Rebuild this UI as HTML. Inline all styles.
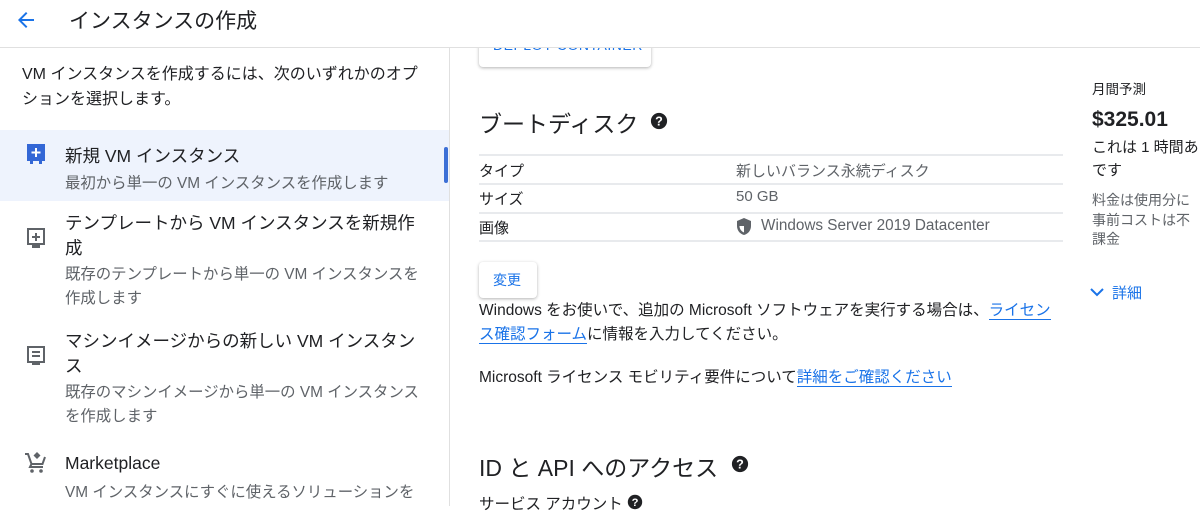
<!DOCTYPE html>
<html><head><meta charset="utf-8"><style>
*{margin:0;padding:0;box-sizing:border-box}
body{width:1200px;height:506px;overflow:hidden;background:#fff;font-family:"Liberation Sans","Noto Sans CJK JP",sans-serif;color:#202124;position:relative}
.a{position:absolute;white-space:nowrap}
.g{color:#5f6368}
.b{color:#1a73e8}
.lk{color:#1a73e8;border-bottom:1px solid #1a73e8}
.hr{position:absolute;left:479px;width:584px;height:2px;background:#e8eaed}
</style></head><body>
<div class="a" style="left:479px;top:25px;width:172px;height:42px;background:#fff;border-radius:4px;box-shadow:0 1px 3px rgba(0,0,0,.3);overflow:hidden"><div style="position:absolute;left:14px;top:12px;font-size:14px;color:#1a73e8;letter-spacing:.5px">DEPLOY CONTAINER</div></div>
<div class="a" style="left:0;top:0;width:1200px;height:47px;background:#fff;z-index:2"></div>
<svg class="a" style="left:14px;top:8px;z-index:3" width="24" height="24" viewBox="0 0 24 24"><path d="M20 11H7.8l5.6-5.6L12 4l-8 8 8 8 1.4-1.4L7.8 13H20z" fill="#1a73e8"/></svg>
<div class="a" style="left:69px;top:5px;font-size:21px;z-index:3">インスタンスの作成</div>
<div class="a" style="left:0;top:47px;width:1200px;height:1px;background:#e0e0e0;z-index:3"></div>
<div class="a" style="left:449px;top:48px;width:1px;height:458px;background:#e0e0e0"></div>

<div class="a" style="left:22px;top:62px;font-size:16px;line-height:25px">VM インスタンスを作成するには、次のいずれかのオプ<br>ションを選択します。</div>

<div class="a" style="left:0;top:130px;width:449px;height:71px;background:#eef3fd"></div>
<div class="a" style="left:444px;top:147px;width:4px;height:36px;background:#3c6fd6;border-radius:2px"></div>
<svg class="a" style="left:26px;top:143px" width="20" height="22" viewBox="0 0 20 22"><path d="M1 1h18v17h-3v3h-3v-3H7v3H4v-3H1z" fill="#3367d6"/><path d="M9 5h2v3.5h3.5v2H11V14H9v-3.5H5.5v-2H9z" fill="#fff"/></svg>
<div class="a" style="left:65px;top:143px;font-size:17.5px">新規 VM インスタンス</div>
<div class="a g" style="left:65px;top:171px;font-size:15.4px">最初から単一の VM インスタンスを作成します</div>

<svg class="a" style="left:26px;top:227px" width="20" height="22" viewBox="0 0 20 22"><path d="M2 2h16v15H2z" fill="none" stroke="#5f6368" stroke-width="2"/><path d="M3 17h3v4h8v-4h3" fill="#5f6368"/><path d="M9 6h2v3h3v2h-3v3H9v-3H6V9h3z" fill="#5f6368"/></svg>
<div class="a" style="left:65px;top:211px;font-size:17.5px;line-height:25px">テンプレートから VM インスタンスを新規作<br>成</div>
<div class="a g" style="left:65px;top:263px;font-size:15.4px;line-height:24px">既存のテンプレートから単一の VM インスタンスを<br>作成します</div>

<svg class="a" style="left:26px;top:345px" width="20" height="22" viewBox="0 0 20 22"><path d="M2 2h16v15H2z" fill="none" stroke="#5f6368" stroke-width="2"/><path d="M3 17h3v3h8v-3h3" fill="#5f6368"/><rect x="6" y="6" width="8" height="2" fill="#5f6368"/><rect x="6" y="10" width="8" height="2" fill="#5f6368"/></svg>
<div class="a" style="left:65px;top:329px;font-size:17.5px;line-height:25px">マシンイメージからの新しい VM インスタン<br>ス</div>
<div class="a g" style="left:65px;top:381px;font-size:15.4px;line-height:24px">既存のマシンイメージから単一の VM インスタンス<br>を作成します</div>

<svg class="a" style="left:24px;top:451px" width="24" height="24" viewBox="0 0 24 24"><path d="M1 3h3l3.5 10h11L21 6" fill="none" stroke="#5f6368" stroke-width="2"/><path d="M7.5 13l-1.5 3h13" fill="none" stroke="#5f6368" stroke-width="2"/><circle cx="8" cy="20" r="1.8" fill="#5f6368"/><circle cx="17" cy="20" r="1.8" fill="#5f6368"/><path d="M13 1l3.5 3.5L13 8 9.5 4.5z" fill="#5f6368"/></svg>
<div class="a" style="left:65px;top:453px;font-size:17.5px">Marketplace</div>
<div class="a g" style="left:65px;top:480px;font-size:15.4px">VM インスタンスにすぐに使えるソリューションを</div>

<div class="a" style="left:479px;top:105px;font-size:23px">ブートディスク</div>
<svg class="a" style="left:650px;top:112px" width="18" height="18" viewBox="0 0 20 20"><circle cx="10" cy="10" r="9" fill="#202124"/><text x="10" y="15" font-size="14" font-weight="bold" fill="#fff" text-anchor="middle" font-family="Liberation Sans">?</text></svg>
<div class="hr" style="top:154px"></div>
<div class="a" style="left:479px;top:160px;font-size:15px">タイプ</div><div class="a g" style="left:736px;top:160px;font-size:15px">新しいバランス永続ディスク</div>
<div class="hr" style="top:183px"></div>
<div class="a" style="left:479px;top:188px;font-size:15px">サイズ</div><div class="a g" style="left:736px;top:188px;font-size:15px">50 GB</div>
<div class="hr" style="top:212px"></div>
<div class="a" style="left:479px;top:217px;font-size:15px">画像</div>
<svg class="a" style="left:736px;top:218px" width="16" height="17" viewBox="0 0 16 17"><path d="M8 0L1 3v5c0 4.5 3 8 7 9 4-1 7-4.5 7-9V3z" fill="#5f6368"/><path d="M8 2.5v12c-2.5-1-4.5-3.5-4.5-6.5H8z" fill="#fff"/></svg>
<div class="a g" style="left:761px;top:217px;font-size:15.3px">Windows Server 2019 Datacenter</div>
<div class="hr" style="top:240px"></div>

<div class="a" style="left:479px;top:262px;width:58px;height:36px;border-radius:4px;box-shadow:0 1px 3px rgba(0,0,0,.3);background:#fff"><div style="position:absolute;left:14px;top:8px;font-size:14px;color:#1a73e8">変更</div></div>
<div class="a" style="left:479px;top:299px;font-size:15.5px;line-height:24px">Windows をお使いで、追加の Microsoft ソフトウェアを実行する場合は、<span class="lk">ライセン</span><br><span class="lk">ス確認フォーム</span>に情報を入力してください。</div>
<div class="a" style="left:479px;top:366px;font-size:15.5px;line-height:24px">Microsoft ライセンス モビリティ要件について<span class="lk">詳細をご確認ください</span></div>

<div class="a" style="left:479px;top:449px;font-size:23px">ID と API へのアクセス</div>
<svg class="a" style="left:731px;top:455px" width="18" height="18" viewBox="0 0 20 20"><circle cx="10" cy="10" r="9" fill="#202124"/><text x="10" y="15" font-size="14" font-weight="bold" fill="#fff" text-anchor="middle" font-family="Liberation Sans">?</text></svg>
<div class="a" style="left:479px;top:492px;font-size:15.5px">サービス アカウント</div>
<svg class="a" style="left:627px;top:494px" width="16" height="16" viewBox="0 0 20 20"><circle cx="10" cy="10" r="9" fill="#202124"/><text x="10" y="15" font-size="14" font-weight="bold" fill="#fff" text-anchor="middle" font-family="Liberation Sans">?</text></svg>

<div class="a" style="left:1092px;top:78px;font-size:13.5px">月間予測</div>
<div class="a" style="left:1092px;top:108px;font-size:21px;font-weight:bold">$325.01</div>
<div class="a" style="left:1092px;top:136px;font-size:15px;line-height:23px">これは 1 時間あ<br>です</div>
<div class="a g" style="left:1092px;top:191px;font-size:14px;line-height:19.5px">料金は使用分に<br>事前コストは不<br>課金</div>
<svg class="a" style="left:1089px;top:284px" width="16" height="16" viewBox="0 0 16 16"><path d="M2 5l6 6 6-6" fill="none" stroke="#1a73e8" stroke-width="2"/></svg>
<div class="a b" style="left:1112px;top:282px;font-size:15px">詳細</div>
</body></html>
